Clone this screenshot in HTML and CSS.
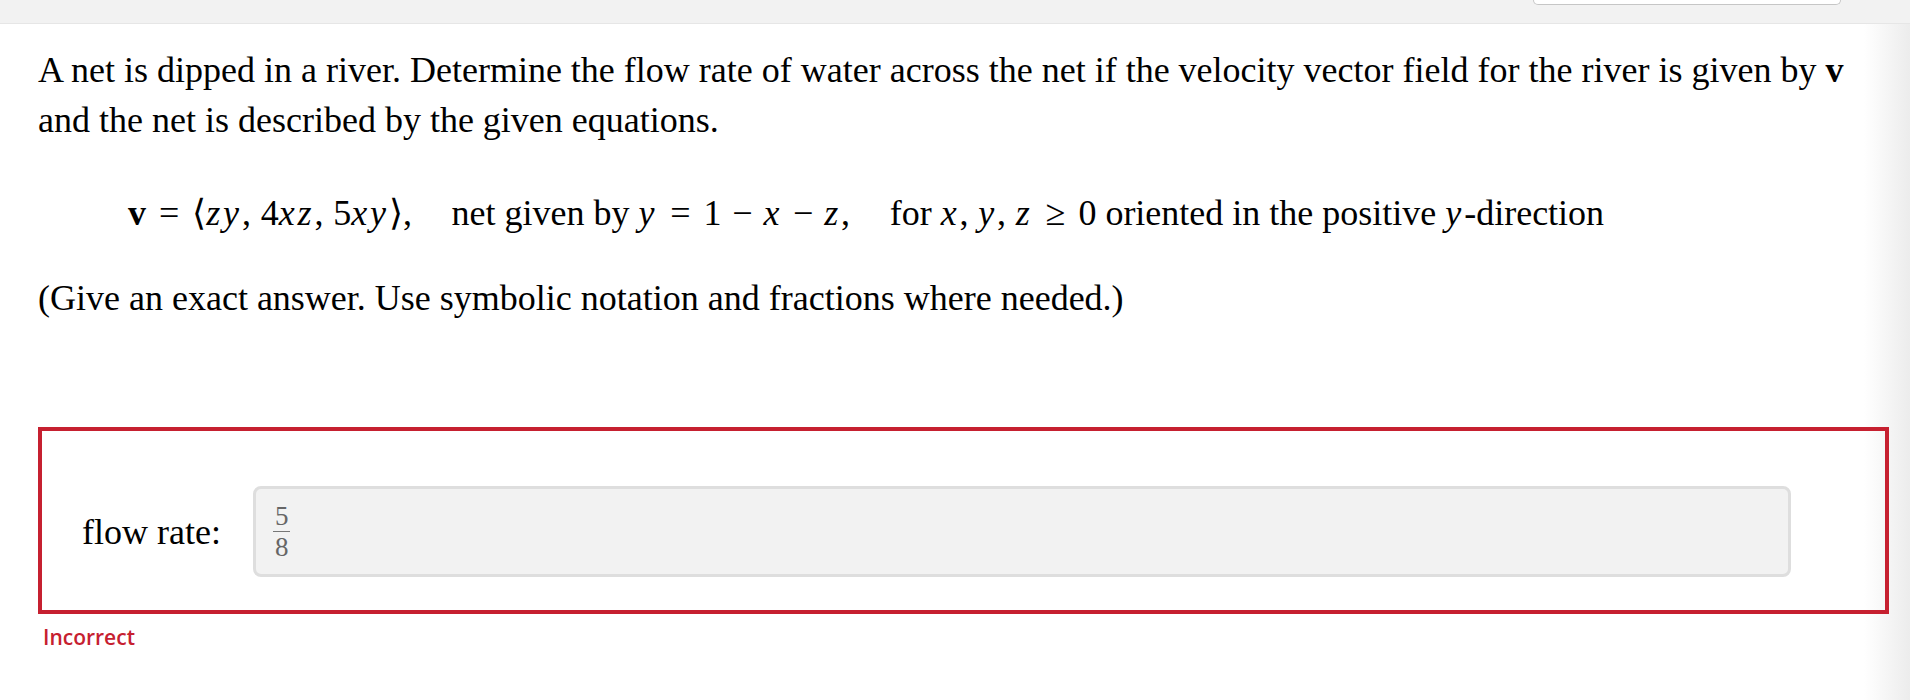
FILE: index.html
```html
<!DOCTYPE html>
<html lang="en">
<head>
<meta charset="utf-8">
<title>Flow rate across a net</title>
<link rel="stylesheet" href="styles.css">
</head>
<body>
<header class="topbar">
  <div class="topbar-tab"></div>
</header>
<main class="content">
  <p class="prompt">A net is dipped in a river. Determine the flow rate of water across the net if the velocity vector field for the river is given by <b class="vec">v</b> and the net is described by the given equations.</p>
  <p class="equation"><b class="vec">v</b><span class="rel">=</span>⟨<i>zy</i>,<span class="thin"></span>4<i>xz</i>,<span class="thin"></span>5<i>xy</i>⟩,<span class="quad"></span>net given by <i>y</i><span class="rel">=</span>1<span class="bin">−</span><i>x</i><span class="bin">−</span><i>z</i>,<span class="quad"></span>for <i>x</i>,<span class="thin"></span><i>y</i>,<span class="thin"></span><i>z</i><span class="rel">≥</span>0 oriented in the positive <i>y</i>-direction</p>
  <p class="note">(Give an exact answer. Use symbolic notation and fractions where needed.)</p>
  <section class="answer-box">
    <span class="answer-label">flow rate:</span>
    <div class="answer-field">
      <span class="frac"><span class="num">5</span><span class="den">8</span></span>
    </div>
  </section>
  <p class="feedback">Incorrect</p>
</main>
</body>
</html>
```

FILE: styles.css
```css
html, body {
  margin: 0;
  padding: 0;
}
body {
  font-family: "Liberation Serif", "Times New Roman", serif;
  color: #000;
  background: linear-gradient(to right, #ffffff calc(100% - 46px), #ececec 100%);
  min-height: 700px;
}
.topbar {
  height: 23px;
  background: #f2f2f2;
  border-bottom: 1px solid #e6e6e6;
  display: flex;
  justify-content: flex-end;
  align-items: flex-start;
}
.topbar-tab {
  width: 306px;
  height: 4px;
  margin-right: 69px;
  background: #ffffff;
  border: 1px solid #c6c6c6;
  border-top: none;
  border-radius: 0 0 5px 5px;
}
.content {
  padding: 0 21px 0 38px;
}
.prompt {
  margin: 21px 0 0;
  font-size: 36px;
  line-height: 50px;
}
.vec {
  font-weight: bold;
}
.equation {
  margin: 43px 0 0 90px;
  font-size: 36px;
  line-height: 50px;
  white-space: nowrap;
}
.equation i {
  font-style: italic;
  letter-spacing: 0.08em;
}
.rel {
  display: inline-block;
  padding: 0 0.36em;
}
.bin {
  display: inline-block;
  padding: 0 0.3em;
}
.thin {
  display: inline-block;
  width: 0.27em;
}
.quad {
  display: inline-block;
  width: 1.1em;
}
.note {
  margin: 35px 0 0;
  font-size: 36px;
  line-height: 50px;
}
.answer-box {
  margin-top: 104px;
  border: 4px solid #c62030;
  padding: 55px 94px 33px 40px;
  display: flex;
  align-items: center;
  gap: 32px;
}
.answer-label {
  font-size: 36px;
  line-height: 40px;
  white-space: nowrap;
}
.answer-field {
  flex: 1;
  height: 85px;
  background: #f2f2f2;
  border: 3px solid #dedede;
  border-radius: 8px;
  display: flex;
  align-items: center;
  padding-left: 17px;
}
.frac {
  display: inline-flex;
  flex-direction: column;
  align-items: center;
  color: #666;
  font-size: 27px;
  line-height: 30px;
}
.num {
  padding: 0 2px;
  border-bottom: 1.5px solid #777;
}
.feedback {
  margin: 9px 0 0 5px;
  font-family: "Open Sans", "Liberation Sans", sans-serif;
  font-weight: 600;
  font-size: 21px;
  line-height: 28px;
  color: #c62030;
}
```
